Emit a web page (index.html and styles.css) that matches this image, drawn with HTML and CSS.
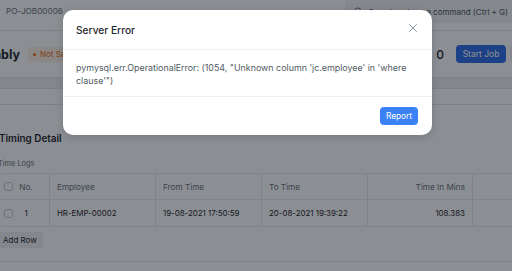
FILE: index.html
```html
<!DOCTYPE html>
<html lang="en">

<head>
    <meta charset="UTF-8">
    <meta name="viewport" content="width=device-width, initial-scale=1.0">
    <title>Job Card</title>
    <link rel="stylesheet" href="styles.css">
</head>

<body>
    <div class="page">
        <div class="navbar">
            <div class="breadcrumb">PO-JOB00006</div>
            <div class="search-bar">
                <svg class="search-icon" width="9" height="9" viewBox="0 0 10 10">
                    <circle cx="4.3" cy="4.3" r="3.3" fill="none" stroke="#6b7280" stroke-width="1"/>
                    <path d="M6.8 6.8 L9 9" stroke="#6b7280" stroke-width="1"/>
                </svg>
                <span>Search or type a command (Ctrl + G)</span>
            </div>
        </div>

        <div class="page-head">
            <div class="title-wrap">
                <h1 class="title">Assembly</h1>
            </div>
            <span class="indicator"><span class="dot"></span>Not Saved</span>
            <div class="head-actions">
                <span class="timer">0</span>
                <button class="btn-primary">Start Job</button>
                <button class="btn-default">&nbsp;</button>
            </div>
        </div>

        <div class="page-gap"></div>

        <div class="form-card">
            <div class="form-dashboard"></div>

            <div class="form-section">
                <h2 class="section-title">Timing Detail</h2>
                <div class="field-label">Time Logs</div>

                <div class="grid">
                    <div class="grid-row grid-head">
                        <div class="cell cell-idx"><span class="check"></span><span class="idx">No.</span></div>
                        <div class="cell">Employee</div>
                        <div class="cell">From Time</div>
                        <div class="cell">To Time</div>
                        <div class="cell cell-right">Time In Mins</div>
                        <div class="cell"></div>
                    </div>
                    <div class="grid-row">
                        <div class="cell cell-idx"><span class="check"></span><span class="idx">1</span></div>
                        <div class="cell">HR-EMP-00002</div>
                        <div class="cell">19-08-2021 17:50:59</div>
                        <div class="cell">20-08-2021 19:39:22</div>
                        <div class="cell cell-right">108.383</div>
                        <div class="cell"></div>
                    </div>
                </div>

                <button class="btn-add">Add Row</button>
            </div>

            <div class="section-line"></div>
        </div>
    </div>

    <div class="backdrop"></div>

    <div class="modal">
        <div class="modal-header">
            <span class="modal-title">Server Error</span>
            <svg class="close-icon" width="10" height="10" viewBox="0 0 10 10">
                <path d="M1.5 1.5 L8.5 8.5 M8.5 1.5 L1.5 8.5" stroke="#8d959c" stroke-width="1" stroke-linecap="round"/>
            </svg>
        </div>
        <div class="modal-body">
            pymysql.err.OperationalError: (1054, "Unknown column 'jc.employee' in 'where clause'")
        </div>
        <div class="modal-footer">
            <button class="btn-report">Report</button>
        </div>
    </div>
</body>

</html>
```

FILE: styles.css
```css
* {
    margin: 0;
    padding: 0;
    box-sizing: border-box;
}

body {
    font-family: 'Inter', 'Noto Sans', sans-serif;
    background-color: #fff;
    color: #1f272e;
    width: 512px;
    height: 271px;
    overflow: hidden;
    position: relative;
}

button {
    font-family: inherit;
    border: none;
}

/* underlying page */

.navbar {
    height: 31px;
    display: flex;
    justify-content: space-between;
    align-items: flex-start;
    border-bottom: 1px solid #e2e6e9;
}

.breadcrumb {
    margin-top: 5px;
    margin-left: 6px;
    font-size: 8.2px;
    line-height: 12px;
    color: #6b7280;
}

.search-bar {
    width: 167px;
    height: 23px;
    background-color: #f3f3f3;
    border-radius: 0 0 0 6px;
    display: flex;
    align-items: center;
    justify-content: flex-end;
    gap: 5px;
    padding-right: 4px;
    font-size: 8px;
    color: #4b5563;
    white-space: nowrap;
}

.page-head {
    height: 47px;
    display: flex;
    align-items: center;
    border-bottom: 1px solid #e2e6e9;
}

.title-wrap {
    width: 20px;
    overflow: hidden;
    display: flex;
    justify-content: flex-end;
}

.title {
    font-size: 12.5px;
    font-weight: 700;
    white-space: nowrap;
    color: #1f272e;
}

.indicator {
    margin-left: 8px;
    display: flex;
    align-items: center;
    gap: 4px;
    height: 15px;
    padding: 0 5px;
    background-color: #fff1e7;
    color: #e86c13;
    font-size: 8px;
    border-radius: 4px;
    white-space: nowrap;
}

.dot {
    width: 3px;
    height: 3px;
    border-radius: 50%;
    background-color: #e86c13;
}

.head-actions {
    margin-left: auto;
    display: flex;
    align-items: center;
}

.timer {
    font-size: 12px;
    font-weight: 500;
    color: #1f272e;
    margin-right: 12px;
}

.btn-primary {
    width: 50px;
    height: 18px;
    background-color: #2f6fe8;
    color: #fff;
    font-size: 8.5px;
    border-radius: 4px;
}

.btn-default {
    width: 20px;
    height: 18px;
    margin-left: 4px;
    margin-right: -18px;
    background-color: #f0f1f2;
    border-radius: 4px;
}

.page-gap {
    height: 10px;
    background-color: #f0f1f3;
}

.form-card {
    background-color: #fff;
}

.form-dashboard {
    height: 17px;
    border-top: 1px solid #e2e6e9;
    border-bottom: 1px solid #e2e6e9;
}

.form-section {
    margin-left: -3px;
    padding-top: 27px;
}

.section-title {
    font-size: 9.9px;
    font-weight: 600;
    line-height: 13px;
    margin-left: 2px;
    color: #1f272e;
}

.field-label {
    margin-top: 13px;
    margin-left: 1px;
    font-size: 7.4px;
    line-height: 12px;
    color: #6b7280;
}

.grid {
    margin-top: 3px;
    width: 560px;
    border: 1px solid #e7eaec;
    border-radius: 6px;
}

.grid-row {
    display: grid;
    grid-template-columns: 52px 106px 106px 106px 105px 1fr;
    height: 26px;
    border-bottom: 1px solid #e7eaec;
    font-size: 7.9px;
    color: #1f272e;
}

.grid-row:last-child {
    border-bottom: none;
}

.grid-head {
    color: #6b7280;
    font-size: 8.2px;
}

.cell {
    display: flex;
    align-items: center;
    padding: 0 7px;
    border-right: 1px solid #e7eaec;
    white-space: nowrap;
}

.cell:last-child {
    border-right: none;
}

.cell-right {
    justify-content: flex-end;
}

.cell-idx {
    padding-left: 6px;
}

.check {
    width: 9px;
    height: 9px;
    border: 1px solid #c6ccd1;
    border-radius: 3px;
    background-color: #fff;
}

.idx {
    width: 26px;
    text-align: center;
}

.btn-add {
    margin-top: 5px;
    height: 16px;
    padding: 0 6px;
    background-color: #f0f1f3;
    border-radius: 4px;
    font-size: 8px;
    color: #1f272e;
}

.section-line {
    margin-top: 13px;
    border-top: 1px solid #e2e6e9;
}

/* overlay + dialog */

.backdrop {
    position: absolute;
    inset: 0;
    background-color: rgba(8, 15, 23, 0.47);
}

.modal {
    position: absolute;
    left: 63px;
    top: 10px;
    width: 369px;
    height: 125px;
    background-color: #fff;
    border-radius: 10px;
    box-shadow: 0 2px 8px rgba(0, 0, 0, 0.15);
    overflow: hidden;
}

.modal-header {
    height: 40px;
    display: flex;
    align-items: center;
    justify-content: space-between;
    padding: 0 14px 0 13px;
    border-bottom: 1px solid #f0f1f2;
}

.modal-title {
    font-size: 10.2px;
    font-weight: 500;
    color: #1f272e;
}

.close-icon {
    margin-top: -4px;
}

.modal-body {
    height: 47px;
    padding: 11px 13px 0 13px;
    font-size: 8.9px;
    line-height: 13px;
    color: #505a62;
    border-bottom: 1px solid #f0f1f2;
}

.modal-footer {
    display: flex;
    justify-content: flex-end;
    padding: 10px 14px 0 0;
}

.btn-report {
    width: 38px;
    height: 18px;
    background-color: #3b82f6;
    color: #fff;
    font-size: 8.3px;
    border-radius: 4px;
}
```
